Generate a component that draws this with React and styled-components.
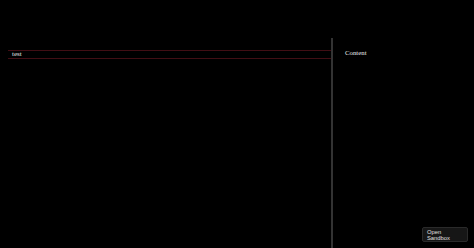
import React from "react";
import styled, { createGlobalStyle } from "styled-components";

const Global = createGlobalStyle`
  html, body { margin: 0; padding: 0; background: #000; height: 100%; }
  #root { height: 100%; }
`;

const Page = styled.div`
  display: flex;
  height: 248px;
  background: #000;
  font-family: "Liberation Serif", "Times New Roman", serif;
  color: #e8e8e8;
`;

const LeftPane = styled.div`
  width: 331px;
  padding-top: 50px;
  box-sizing: border-box;
`;

const Row = styled.div`
  margin-left: 8px;
  height: 7px;
  border-top: 1px solid #420e14;
  border-bottom: 1px solid #420e14;
  padding-left: 4px;
  display: flex;
  align-items: center;
  font-size: 7px;
  line-height: 7px;
  color: #e4e4e4;
`;

const RightPane = styled.div`
  flex: 1;
  margin-top: 38px;
  border-left: 2px solid #333333;
  padding: 11px 12px;
  font-size: 6.8px;
  color: #ececec;
`;

const SandboxButton = styled.button`
  position: fixed;
  right: 6px;
  bottom: 6px;
  width: 46px;
  height: 15px;
  padding: 1px 4px;
  box-sizing: border-box;
  background: #161616;
  border: 1px solid #2a2a2a;
  border-radius: 2px;
  color: #e0e0e0;
  font-family: "Liberation Sans", Arial, sans-serif;
  font-size: 5.8px;
  line-height: 6px;
  text-align: left;
  cursor: pointer;
`;

export default function App() {
  return (
    <>
      <Global />
      <Page>
        <LeftPane>
          <Row>test</Row>
        </LeftPane>
        <RightPane>Content</RightPane>
      </Page>
      <SandboxButton>
        Open
        <br />
        Sandbox
      </SandboxButton>
    </>
  );
}
